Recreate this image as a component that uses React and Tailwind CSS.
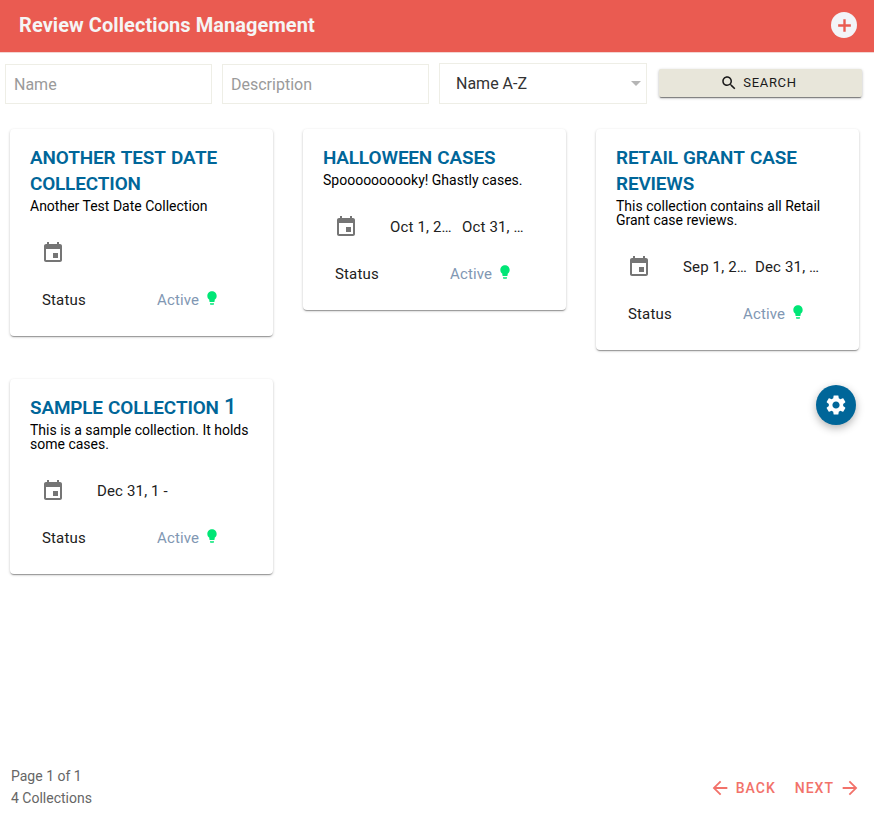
import React from 'react';

const collections = [
  {
    title: 'Another Test Date Collection',
    description: 'Another Test Date Collection',
    start: '',
    end: '',
  },
  {
    title: 'Halloween Cases',
    description: 'Spoooooooooky! Ghastly cases.',
    start: 'Oct 1, 2…',
    end: 'Oct 31, …',
  },
  {
    title: 'Retail Grant Case Reviews',
    description: 'This collection contains all Retail Grant case reviews.',
    start: 'Sep 1, 2…',
    end: 'Dec 31, …',
  },
  {
    title: 'Sample Collection 1',
    description: 'This is a sample collection. It holds some cases.',
    start: 'Dec 31, 1 -',
    end: '',
  },
];

const Icon = ({ d, className }) => (
  <svg viewBox="0 0 24 24" fill="currentColor" className={className}>
    <path d={d} />
  </svg>
);

const EVENT = 'M17 12h-5v5h5v-5zM16 1v2H8V1H6v2H5c-1.11 0-1.99.9-1.99 2L3 19c0 1.1.89 2 2 2h14c1.1 0 2-.9 2-2V5c0-1.1-.9-2-2-2h-1V1h-2zm3 18H5V8h14v11z';
const BULB = 'M9 21c0 .55.45 1 1 1h4c.55 0 1-.45 1-1v-1H9v1zm3-19C8.14 2 5 5.14 5 9c0 2.38 1.19 4.47 3 5.74V17c0 .55.45 1 1 1h6c.55 0 1-.45 1-1v-2.26c1.81-1.27 3-3.36 3-5.74 0-3.86-3.14-7-7-7z';
const GEAR = 'M19.14 12.94c.04-.3.06-.61.06-.94 0-.32-.02-.64-.07-.94l2.03-1.58c.18-.14.23-.41.12-.61l-1.92-3.32c-.12-.22-.37-.29-.59-.22l-2.39.96c-.5-.38-1.03-.7-1.62-.94l-.36-2.54c-.04-.24-.24-.41-.48-.41h-3.84c-.24 0-.43.17-.47.41l-.36 2.54c-.59.24-1.13.57-1.62.94l-2.39-.96c-.22-.08-.47 0-.59.22L2.74 8.87c-.12.21-.08.47.12.61l2.03 1.58c-.05.3-.09.63-.09.94s.02.64.07.94l-2.03 1.58c-.18.14-.23.41-.12.61l1.92 3.32c.12.22.37.29.59.22l2.39-.96c.5.38 1.03.7 1.62.94l.36 2.54c.05.24.24.41.48.41h3.84c.24 0 .44-.17.47-.41l.36-2.54c.59-.24 1.13-.56 1.62-.94l2.39.96c.22.08.47 0 .59-.22l1.92-3.32c.12-.22.07-.47-.12-.61l-2.01-1.58zM12 15.6c-1.98 0-3.6-1.62-3.6-3.6s1.62-3.6 3.6-3.6 3.6 1.62 3.6 3.6-1.62 3.6-3.6 3.6z';
const SEARCH = 'M15.5 14h-.79l-.28-.27C15.41 12.59 16 11.11 16 9.5 16 5.91 13.09 3 9.5 3S3 5.91 3 9.5 5.91 16 9.5 16c1.61 0 3.09-.59 4.23-1.57l.27.28v.79l5 4.99L20.49 19l-4.99-5zm-6 0C7.01 14 5 11.99 5 9.5S7.01 5 9.5 5 14 7.01 14 9.5 11.99 14 9.5 14z';
const BACK = 'M20 11H7.83l5.59-5.59L12 4l-8 8 8 8 1.41-1.41L7.83 13H20v-2z';
const NEXT = 'M12 4l-1.41 1.41L16.17 11H4v2h12.17l-5.58 5.59L12 20l8-8z';

const CollectionCard = ({ title, description, start, end }) => (
  <div className="bg-white rounded-[4px] shadow-[0_1px_3px_rgba(0,0,0,0.2),0_1px_1px_rgba(0,0,0,0.14),0_2px_1px_-1px_rgba(0,0,0,0.2)] pl-5 pr-4 pt-[15px] pb-[26px]">
    <h2 className="text-[22px] leading-[26px] tracking-[-0.17px] font-medium lowercase [font-variant-caps:small-caps] text-[#006699]">{title}</h2>
    <p className="mt-[3px] text-[14px] leading-[14px] text-black">{description}</p>
    <div className="flex items-center h-[20px] mt-[30px] pl-[12px] text-[15px] tracking-[0.15px] text-[#212121]">
      <Icon d={EVENT} className="w-6 h-6 shrink-0 text-[#757575] -ml-[1px]" />
      <div className="flex ml-[32px] gap-[6px]">
        <span className={end ? 'w-[66px] whitespace-nowrap' : 'whitespace-nowrap'}>{start}</span>
        {end && <span className="w-[66px] whitespace-nowrap">{end}</span>}
      </div>
    </div>
    <div className="flex items-center mt-[27px] pl-3 text-[15px] tracking-[0.15px] leading-5">
      <span className="w-[115px] text-[#212121]">Status</span>
      <span className="text-[#8197b3]">Active</span>
      <Icon d={BULB} className="w-[16px] h-[16px] ml-[5px] -mt-[5px] text-[#00e676]" />
    </div>
  </div>
);

const App = () => {
  return (
    <div className="relative min-h-[819px] flex flex-col bg-white font-['Roboto',sans-serif]">
      <header className="h-[53px] shrink-0 flex items-center justify-between pl-[19px] pr-[17px] pb-[2px] bg-[#ea5b51] border-b border-[#f3d5d2]">
        <h1 className="text-[20px] font-bold tracking-[0.07px] text-[#f5f5f5]">Review Collections Management</h1>
        <span className="flex items-center justify-center w-[26px] h-[26px] rounded-full bg-[#f3f4f8] text-[#ea5b51]">
          <svg viewBox="0 0 24 24" className="w-[19px] h-[19px]" fill="currentColor">
            <path d="M10.5 4h3v6.5H20v3h-6.5V20h-3v-6.5H4v-3h6.5z" />
          </svg>
        </span>
      </header>

      <div className="flex items-start pt-[10px] pl-[5px]">
        <input
          placeholder="Name"
          className="w-[207px] h-[40px] mt-[1px] px-[8px] border border-[#eeeee6] text-[16px] placeholder:text-[#9a9a9a] outline-none"
        />
        <input
          placeholder="Description"
          className="w-[207px] h-[40px] mt-[1px] ml-[10px] px-[8px] border border-[#eeeee6] text-[16px] placeholder:text-[#9a9a9a] outline-none"
        />
        <div className="relative w-[208px] h-[41px] ml-[10px] flex items-center pl-[16px] border border-[#eeeee6] text-[16px] text-[#333]">
          Name A-Z
          <span className="absolute right-[5px] top-[17px] w-0 h-0 border-x-[5px] border-x-transparent border-t-[5px] border-t-[#b5b5b5]" />
        </div>
        <button className="w-[203px] h-[28px] mt-[6px] ml-[12px] pr-[4px] flex items-center justify-center gap-[5px] bg-[#e8e6da] rounded-[2px] shadow-[0_1px_3px_rgba(0,0,0,0.3),0_2px_1px_-1px_rgba(0,0,0,0.4)] text-[13px] tracking-[0.7px] text-[#1a1a1a]">
          <Icon d={SEARCH} className="w-[18px] h-[18px]" />
          SEARCH
        </button>
      </div>

      <main className="grid grid-cols-[263px_263px_263px] gap-x-[30px] gap-y-[29px] items-start pt-[25px] pl-[10px]">
        {collections.map((c) => (
          <CollectionCard key={c.title} {...c} />
        ))}
      </main>

      <button className="absolute left-[816px] top-[385px] w-10 h-10 flex items-center justify-center rounded-full bg-[#006699] text-white shadow-[0_3px_8px_rgba(0,0,0,0.3)]">
        <Icon d={GEAR} className="w-6 h-6" />
      </button>

      <footer className="mt-auto flex items-center justify-between pl-[11px] pr-[13px] pb-[10px]">
        <div className="text-[14px] leading-[22px] text-[#666]">
          <div>Page 1 of 1</div>
          <div>4 Collections</div>
        </div>
        <div className="flex items-center gap-[19px] mt-[2px] text-[14px] font-medium tracking-[1px] text-[#f2726a]">
          <span className="flex items-center gap-[5px]">
            <Icon d={BACK} className="w-[22px] h-[22px]" />
            BACK
          </span>
          <span className="flex items-center gap-[5px]">
            NEXT
            <Icon d={NEXT} className="w-[22px] h-[22px]" />
          </span>
        </div>
      </footer>
    </div>
  );
};

export default App;
